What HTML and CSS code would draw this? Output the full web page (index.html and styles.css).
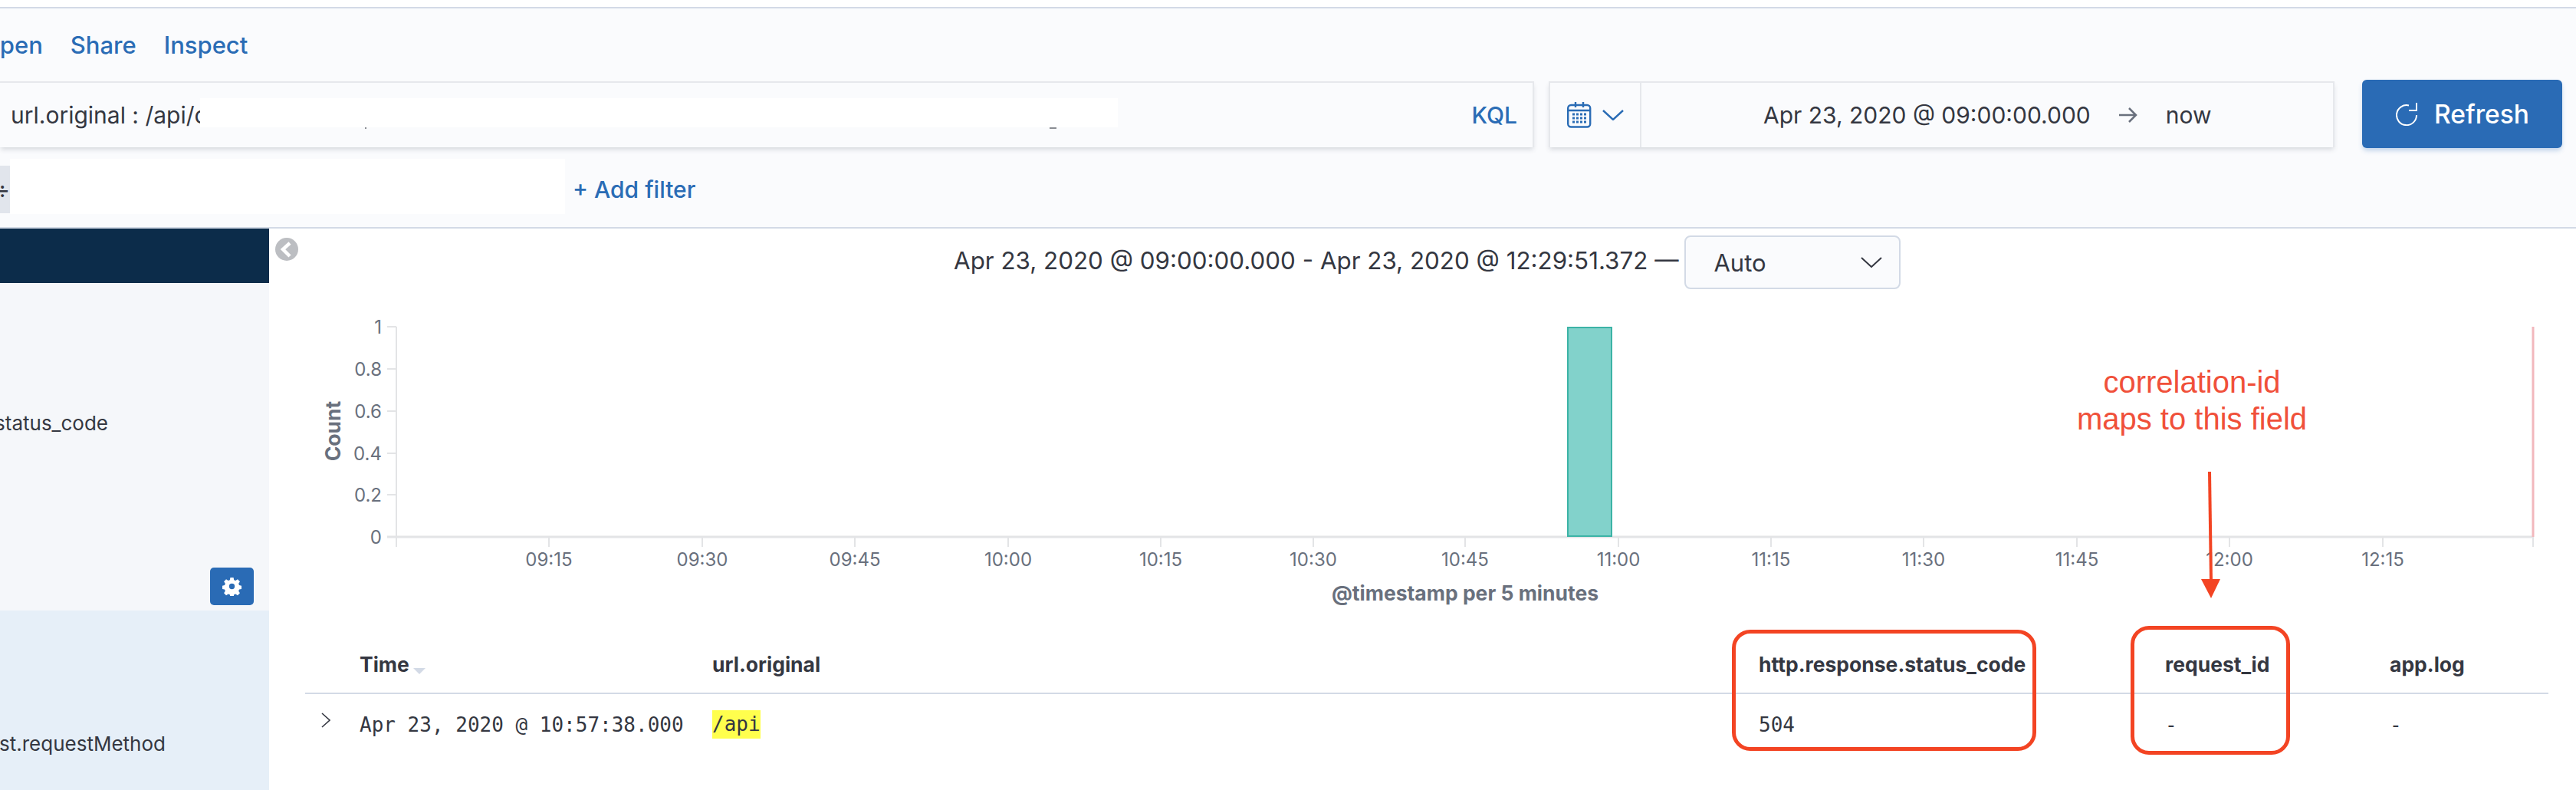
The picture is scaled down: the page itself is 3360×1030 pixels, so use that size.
FILE: index.html
```html
<!DOCTYPE html>
<html lang="en">
<head>
<meta charset="utf-8">
<title>Discover</title>
<link rel="stylesheet" href="styles.css">
</head>
<body>
<div class="page">
  <header class="topstrip"></header>
  <nav class="appnav">
    <a class="navlink">Open</a>
    <a class="navlink">Share</a>
    <a class="navlink">Inspect</a>
  </nav>
  <section class="querybar">
    <div class="queryinput">
      <span class="querytext">url.original : /api/c</span>
      <span class="redact-query"><i class="speck speck-a"></i><i class="speck speck-b"></i></span>
      <span class="kql">KQL</span>
    </div>
    <div class="datepicker">
      <div class="quickselect">
        <svg class="cal" viewBox="0 0 32 34" fill="none" stroke="#2a6cb5" stroke-width="2.4">
          <rect x="1.2" y="4" width="29" height="28.5" rx="4"/>
          <path d="M1 11h30M11 0v7M21 0v7"/>
          <path d="M7 16h3M12 16h3M17 16h3M22 16h3M7 21h3M12 21h3M17 21h3M22 21h3M7 26h3M12 26h3M17 26h3M22 26h3" stroke-width="3"/>
        </svg>
        <svg class="chev" viewBox="0 0 28 14" fill="none" stroke="#2a6cb5" stroke-width="2.4"><path d="M1 1l13 12L27 1"/></svg>
      </div>
      <div class="daterange">
        <span>Apr 23, 2020 @ 09:00:00.000</span>
        <svg class="arrow" viewBox="0 0 24 20" fill="none" stroke="#69707d" stroke-width="2.5"><path d="M0 10h22M13 1l9 9-9 9"/></svg>
        <span>now</span>
      </div>
    </div>
    <button class="refresh">
      <svg class="refresh-icon" viewBox="0 0 28 30" fill="none" stroke="#fff" stroke-width="2"><path d="M17 3.5A13 13 0 1 0 27 16"/><path d="M27 0v10h-10"/></svg>
      <span>Refresh</span>
    </button>
  </section>
  <section class="filterbar">
    <span class="chip">÷</span>
    <span class="redact-filter"></span>
    <a class="addfilter">+ Add filter</a>
  </section>
  <main class="workspace">
    <aside class="sidebar">
      <div class="sidehead"></div>
      <div class="sidegroup">
        <span class="fieldname">status_code</span>
        <button class="gear">
          <svg viewBox="0 0 24 24" fill="#fff"><path fill-rule="evenodd" d="M10 1h4l.6 3 2 .9 2.6-1.7 2.8 2.8-1.7 2.6.9 2 3 .6v4l-3 .6-.9 2 1.7 2.6-2.8 2.8-2.6-1.7-2 .9-.6 3h-4l-.6-3-2-.9-2.6 1.7-2.8-2.8 1.7-2.6-.9-2-3-.6v-4l3-.6.9-2-1.7-2.6 2.8-2.8 2.6 1.7 2-.9zM12 8.5a3.5 3.5 0 1 0 0 7 3.5 3.5 0 0 0 0-7z"/></svg>
        </button>
      </div>
      <div class="sidegroup-active">
        <span class="fieldname">st.requestMethod</span>
      </div>
    </aside>
    <button class="collapse">
      <svg viewBox="0 0 30 30"><circle cx="15" cy="15" r="15" fill="#bcbec2"/><path d="M19 7l-9 8 9 9" fill="none" stroke="#fff" stroke-width="4.5"/></svg>
    </button>
    <div class="content">
      <div class="timebar">
        <span>Apr 23, 2020 @ 09:00:00.000 - Apr 23, 2020 @ 12:29:51.372 —</span>
        <div class="interval">
          <span>Auto</span>
          <svg class="chev" viewBox="0 0 28 14" fill="none" stroke="#343741" stroke-width="2"><path d="M1 1l13 12L27 1"/></svg>
        </div>
      </div>
      <svg class="chart" viewBox="0 0 2949 418" width="2949" height="418">
        <g stroke="#e3e4e6" stroke-width="2">
          <path d="M106 47h12M106 102h12M106 157h12M106 212h12M106 266h12"/>
          <path d="M118 47v287"/>
          <path d="M317 321v13M517 321v13M716 321v13M916 321v13M1115 321v13M1314 321v13M1512 321v13M1712 321v13M1911 321v13M2110 321v13M2310 321v13M2509 321v13M2709 321v13M2905 321v13"/>
        </g>
        <path d="M106 321h2799" stroke="#e3e4e6" stroke-width="3"/>
        <rect x="1646" y="48" width="57" height="272" fill="#82d2cb" stroke="#3cb3a6" stroke-width="2"/>
        <path d="M2905 47v274" stroke="#f2b8bd" stroke-width="3"/>
        <g class="ylabel" text-anchor="end">
          <text x="99" y="56">1</text><text x="99" y="111">0.8</text><text x="99" y="166">0.6</text><text x="99" y="221">0.4</text><text x="99" y="275">0.2</text><text x="99" y="330">0</text>
        </g>
        <g class="xlabel" text-anchor="middle">
          <text x="317" y="359">09:15</text><text x="517" y="359">09:30</text><text x="716" y="359">09:45</text><text x="916" y="359">10:00</text><text x="1115" y="359">10:15</text><text x="1314" y="359">10:30</text><text x="1512" y="359">10:45</text><text x="1712" y="359">11:00</text><text x="1911" y="359">11:15</text><text x="2110" y="359">11:30</text><text x="2310" y="359">11:45</text><text x="2509" y="359">12:00</text><text x="2709" y="359">12:15</text>
        </g>
        <text class="axistitle" text-anchor="middle" transform="translate(45 183) rotate(-90)" x="0" y="0">Count</text>
        <text class="axistitle" text-anchor="middle" x="1512" y="404">@timestamp per 5 minutes</text>
      </svg>
      <table class="docs">
        <thead>
          <tr>
            <th class="c-toggle"></th>
            <th class="c-time">Time<svg class="sort" viewBox="0 0 16 8"><path d="M0 0h16L8 8z" fill="#d3dae6"/></svg></th>
            <th class="c-url">url.original</th>
            <th class="c-status">http.response.status_code</th>
            <th class="c-req">request_id</th>
            <th class="c-log">app.log</th>
          </tr>
        </thead>
        <tbody>
          <tr>
            <td class="c-toggle"><svg class="expand" viewBox="0 0 12 20" fill="none" stroke="#343741" stroke-width="1.6"><path d="M1 1l10 9-10 9"/></svg></td>
            <td class="c-time">Apr 23, 2020 @ 10:57:38.000</td>
            <td class="c-url"><mark>/api</mark></td>
            <td class="c-status">504</td>
            <td class="c-req">-</td>
            <td class="c-log">-</td>
          </tr>
        </tbody>
      </table>
    </div>
  </main>
  <div class="note">correlation-id<br>maps to this field</div>
  <svg class="pointer" viewBox="0 0 30 166" width="30" height="166"><path d="M13 0l2 142" stroke="#f34423" stroke-width="4" fill="none"/><path d="M2 140h25l-12 25z" fill="#f34423"/></svg>
  <div class="ring ring-status"></div>
  <div class="ring ring-req"></div>
</div>
</body>
</html>
```
FILE: styles.css
```css
* { box-sizing: border-box; }
html, body { margin: 0; padding: 0; background: #fff; }
body { font-family: Inter, "Liberation Sans", sans-serif; color: #343741; overflow: hidden; }
.page { position: relative; width: 3360px; height: 1030px; overflow: hidden; display: flex; flex-direction: column; }

.topstrip { height: 11px; flex: none; border-bottom: 2px solid #d3dae6; background: #fff; }

.appnav { height: 95px; flex: none; background: #fafbfd; display: flex; align-items: center; gap: 36px; margin-left: -24px; font-size: 31px; font-weight: 500; color: #2a6cb5; }
.appnav .navlink { display: block; }

.querybar { flex: none; height: 91px; background: #fafbfd; display: flex; align-items: flex-start; position: relative; z-index: 1; }
.queryinput { width: 2001px; height: 86px; flex: none; display: flex; align-items: center; background: #fafbfd; border-top: 2px solid #e6e8ec; border-right: 2px solid #e6e8ec; box-shadow: 0 4px 6px -1px rgba(60,70,90,.18); padding-left: 14px; }
.querytext { width: 247px; overflow: hidden; white-space: nowrap; font-size: 30px; flex: none; }
.redact-query { position: relative; width: 1197px; height: 38px; background: #fff; flex: none; margin-bottom: 6px; }
.speck { position: absolute; top: 38px; height: 2px; background: #8a8d93; display: block; }
.speck-a { left: 215px; width: 2px; }
.speck-b { left: 1108px; width: 9px; }
.kql { margin-left: auto; margin-right: 20px; font-size: 30px; font-weight: 500; color: #2a6cb5; }

.datepicker { margin-left: 19px; width: 1025px; height: 86px; flex: none; display: flex; background: #fafbfd; border-top: 2px solid #e6e8ec; border-left: 2px solid #e6e8ec; border-right: 2px solid #e6e8ec; box-shadow: 0 4px 6px -1px rgba(60,70,90,.18); }
.quickselect { width: 119px; flex: none; display: flex; align-items: center; gap: 14px; padding-left: 22px; border-right: 2px solid #e6e8ec; }
.cal { width: 32px; height: 34px; flex: none; }
.chev { width: 28px; height: 14px; flex: none; }
.daterange { flex: 1; display: flex; align-items: center; font-size: 30px; padding-left: 159px; gap: 37px; }
.arrow { width: 24px; height: 20px; flex: none; }

.refresh { margin-left: 36px; margin-top: -2px; width: 261px; height: 89px; flex: none; background: #2a6bb5; border: 0; border-radius: 6px; color: #fff; font: 500 33.5px Inter, sans-serif; display: flex; align-items: center; gap: 22px; padding: 0 0 0 44px; box-shadow: 0 4px 6px -1px rgba(42,107,181,.3); }
.refresh-icon { width: 28px; height: 30px; flex: none; }

.filterbar { flex: none; height: 101px; background: #fafbfd; border-bottom: 2px solid #d3dae6; display: flex; align-items: flex-start; padding-top: 10px; }
.chip { width: 13px; height: 62px; margin-top: 9px; background: #e1e5ec; font-size: 30px; line-height: 62px; overflow: hidden; white-space: nowrap; direction: rtl; flex: none; }
.redact-filter { width: 724px; height: 72px; background: #fff; flex: none; }
.addfilter { margin-left: 10px; font-size: 30px; font-weight: 500; color: #2a6cb5; line-height: 80px; }

.workspace { flex: 1; display: flex; min-height: 0; }
.sidebar { width: 351px; flex: none; display: flex; flex-direction: column; }
.sidehead { height: 71px; background: #0c2c4a; flex: none; }
.sidegroup { height: 427px; flex: none; background: #f5f7fa; position: relative; padding-top: 163px; }
.sidegroup-active { flex: 1; background: #e6eff8; padding-top: 154px; }
.fieldname { display: block; font-size: 26px; line-height: 40px; white-space: nowrap; direction: rtl; width: 141px; overflow: hidden; text-align: right; }
.sidegroup-active .fieldname { width: 216px; }
.gear { position: absolute; left: 274px; top: 371px; width: 57px; height: 49px; border: 0; border-radius: 5px; background: #2a6bb5; padding: 0; display: flex; align-items: center; justify-content: center; }
.gear svg { width: 25px; height: 25px; }

.collapse { flex: none; width: 30px; height: 30px; margin: 12px 0 0 8px; padding: 0; border: 0; background: none; }
.collapse svg { display: block; width: 30px; height: 30px; }

.content { flex: 1; min-width: 0; margin-left: -389px; padding-left: 389px; position: relative; display: flex; flex-direction: column; }
.timebar { height: 81px; flex: none; display: flex; align-items: flex-start; padding-left: 855px; margin-top: 9px; font-size: 31.35px; gap: 8px; white-space: nowrap; }
.timebar > span { line-height: 66px; }
.interval { width: 282px; height: 70px; display: flex; align-items: center; justify-content: space-between; padding: 0 22px 0 36px; background: #fafbfd; border: 2px solid #d3dae6; border-radius: 8px; font-size: 31px; }

.chart { display: block; flex: none; margin-left: 10px; margin-top: -9px; }
.ylabel text, .xlabel text { font: 24px Inter, sans-serif; fill: #69707d; }
.axistitle { font: 700 26.5px Inter, sans-serif; fill: #69707d; }

.docs { border-collapse: collapse; table-layout: fixed; width: 2926px; margin-left: 9px; margin-top: 18px; }
.docs th { height: 89px; padding: 14px 0 0; text-align: left; font-size: 26.5px; font-weight: 700; white-space: nowrap; border-bottom: 2px solid #d3dae6; color: #343741; vertical-align: middle; }
.docs td { height: 76px; padding: 4px 0 0; font: 26px "DejaVu Sans Mono", monospace; white-space: nowrap; vertical-align: middle; color: #343741; }
.c-toggle { width: 71px; padding-left: 21px !important; }
.c-time { width: 460px; }
.c-url { width: 1365px; }
.c-status { width: 530px; }
.c-req { width: 293px; }
.sort { width: 16px; height: 8px; margin-left: 5px; vertical-align: -3px; }
.expand { width: 12px; height: 20px; display: block; margin-bottom: 12px; }
mark { background: #ffff4d; color: #343741; display: inline-block; padding: 3px 0; line-height: 31px; }

.note { position: absolute; left: 2650px; top: 474px; width: 418px; text-align: center; font: 40px/48px "Liberation Sans", sans-serif; color: #f0503a; }
.pointer { position: absolute; left: 2869px; top: 615px; }
.ring { position: absolute; border: 5px solid #f34423; border-radius: 24px; }
.ring-status { left: 2259px; top: 821px; width: 397px; height: 158px; }
.ring-req { left: 2779px; top: 816px; width: 208px; height: 168px; }
```
